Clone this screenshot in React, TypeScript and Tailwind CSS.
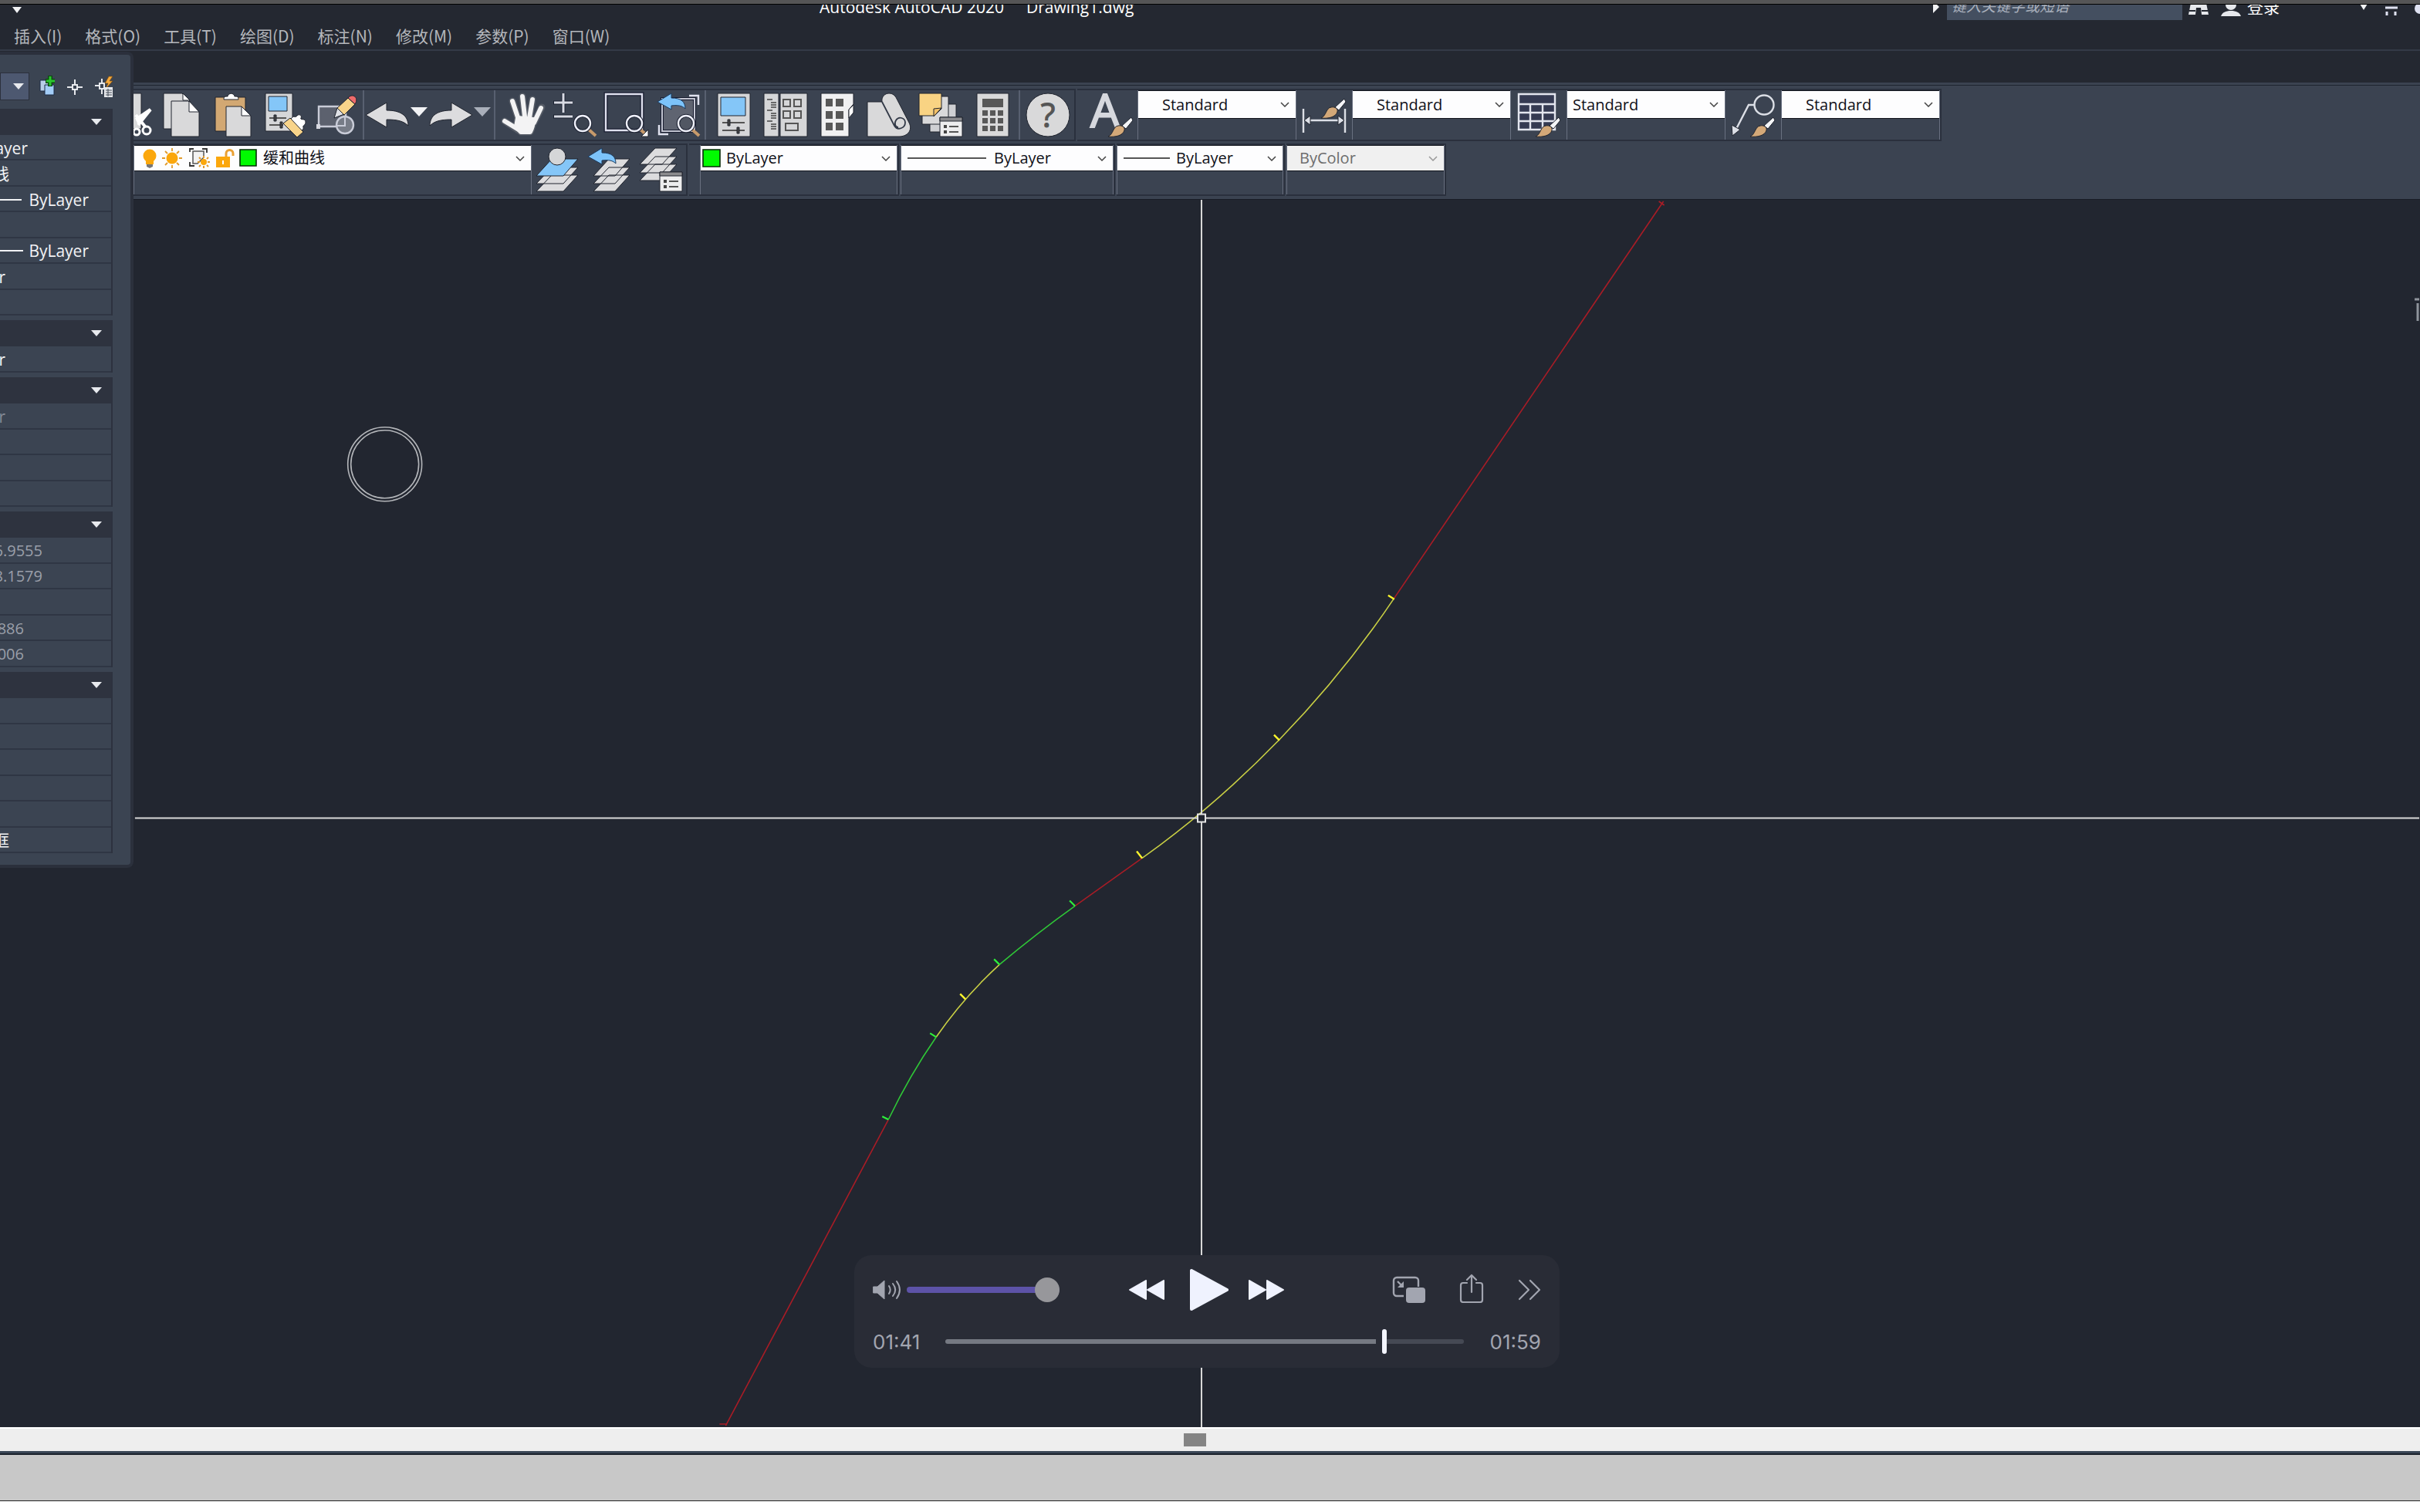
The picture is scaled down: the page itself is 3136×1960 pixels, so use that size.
import React from 'react';

type IconProps = { children: React.ReactNode; label: string };

const menus = ['插入(I)', '格式(O)', '工具(T)', '绘图(D)', '标注(N)', '修改(M)', '参数(P)', '窗口(W)'];

// 56px toolbar button
const Tool: React.FC<IconProps> = ({ children, label }) => (
  <button aria-label={label} className="block size-14 shrink-0">
    <svg viewBox="0 0 56 56" className="size-14 overflow-visible" stroke="#20242e" strokeWidth="1">
      {children}
    </svg>
  </button>
);

const Group: React.FC<{ children: React.ReactNode; last?: boolean }> = ({ children, last }) => (
  <div className={`flex h-full gap-[11px] pt-1 pr-1.5 pl-2 ${last ? '' : 'border-r-2 border-[#586070]'}`}>{children}</div>
);

interface ComboProps {
  label: string;
  value: string;
  width: string;
  pad: string;
  height?: string;
  disabled?: boolean;
  children?: React.ReactNode;
}

const Combo: React.FC<ComboProps> = ({ label, value, width, pad, height = 'h-8', disabled, children }) => (
  <div className="h-full border-x border-[#697080]">
    <div className={`relative border-y border-[#11141c] ${width}`}>
      <select
        aria-label={label}
        disabled={disabled}
        className={`block w-full appearance-none text-xl opacity-100 ${height} ${pad} ${disabled ? 'bg-[#f0f0f0] text-[#6d6d6d]' : 'bg-[#fdfdfe] text-[#101018]'}`}
      >
        <option>{value}</option>
      </select>
      <div className="pointer-events-none absolute inset-y-0 left-0 flex items-center">{children}</div>
      <svg viewBox="0 0 12 7" className="pointer-events-none absolute inset-y-0 right-2 my-auto h-[7px] w-3" fill="none" stroke={disabled ? '#999' : '#444'} strokeWidth="1.5">
        <path d="M1 1l5 5 5-5" />
      </svg>
    </div>
  </div>
);

const Caret: React.FC<{ dim?: boolean }> = ({ dim }) => (
  <svg viewBox="0 0 22 12" className="h-3 w-[22px]" fill={dim ? '#a9afba' : '#f2f3f5'}>
    <path d="M0 0h22L11 12z" />
  </svg>
);

const Lens = () => (
  <>
    <path d="M46 47l9 8" stroke="#c79a6b" strokeWidth="4" />
    <circle cx="38" cy="39" r="10" fill="#3b4351" fillOpacity="0.4" stroke="#1b2030" strokeWidth="4.5" />
    <circle cx="38" cy="39" r="10" fill="none" stroke="#eef0fa" strokeWidth="2.4" />
  </>
);

const Brush = () => (
  <>
    <path d="M54 31l2 4-9 11-5-4z" fill="#f4f5f8" />
    <path d="M24 56c7-3 6-13 13-14 5-1 9 2 8 6-2 7-12 9-21 8z" fill="#d3a878" />
  </>
);

const BackArrow = () => <path d="M1 11L19 0v6c13 0 18 5 18 14-4-4-9-5-18-4v5z" fill="#7cc3fa" stroke="#1d3a5c" />;

const ListWindow = () => (
  <>
    <path d="M27 31h29v25H27z" fill="#ededee" />
    <path d="M27 31h29v5H27z" fill="#8b8b8e" />
    <path d="M32 41h4v4h-4zM32 48h4v4h-4z" fill="#444" stroke="none" />
    <path d="M39 43h12M39 50h12" stroke="#555" strokeWidth="2" />
  </>
);

interface Row {
  text?: string;
  width?: string;
  tone?: string;
  line?: string;
}

interface Section {
  name: string;
  height: string;
  rows: Row[];
}

const bright = 'text-[21px] text-[#f2f3f5]';
const muted = 'text-[21px] text-[#858b96]';
const digits = 'text-xl text-[#9a9fa9]';

const sections: Section[] = [
  {
    name: '常规',
    height: 'h-[268px]',
    rows: [
      { text: 'ByLayer', width: 'w-9', tone: bright },
      { text: '缓和曲线', width: 'w-3', tone: bright },
      { text: 'ByLayer', width: 'w-[115px]', tone: bright, line: 'h-0.5 w-7' },
      {},
      { text: 'ByLayer', width: 'w-[115px]', tone: bright, line: 'h-0.5 w-[30px]' },
      { text: 'ByLayer', width: 'w-[7px]', tone: bright },
      {},
    ],
  },
  { name: '三维效果', height: 'h-[68px]', rows: [{ text: 'ByLayer', width: 'w-[7px]', tone: bright }] },
  { name: '打印样式', height: 'h-[168px]', rows: [{ text: 'ByColor', width: 'w-[7px]', tone: muted }, {}, {}, {}] },
  {
    name: '视图',
    height: 'h-[202px]',
    rows: [
      { text: '6.9555', width: 'w-[55px]', tone: digits },
      { text: '8.1579', width: 'w-[55px]', tone: digits },
      {},
      { text: '886', width: 'w-[31px]', tone: digits },
      { text: '006', width: 'w-[31px]', tone: digits },
    ],
  },
  { name: '其他', height: 'h-[235px]', rows: [{}, {}, {}, {}, {}, { text: '二维线框', width: 'w-3', tone: bright }] },
];

const Palette = () => (
  <aside className="absolute top-[67px] left-0 z-10 w-[173px] rounded-r-lg border-4 border-l-0 border-[#2b303c] bg-[#3b4452] pb-[15px]">
    <div className="mb-[11px] flex h-[59px] items-end">
      <button aria-label="选择类型" className="flex h-9 w-[38px] items-center justify-end border border-[#2b303c] bg-[#4d5870] pr-1.5">
        <svg viewBox="0 0 14 8" className="h-2 w-3.5" fill="#e8eaee"><path d="M0 0h14L7 8z" /></svg>
      </button>
      <button aria-label="切换 PICKADD" className="mb-1.5 ml-3">
        <svg viewBox="0 0 26 28" className="h-7 w-[26px]" stroke="#1d2a44">
          <path d="M2 8h12v14H2z" fill="#b9cfe8" />
          <path d="M8 14h12v13H8z" fill="#a3cdf7" />
          <path d="M15 2v14M9 9h12" stroke="#0e4a12" strokeWidth="6" />
          <path d="M15 3v12M10 9h11" stroke="#2ac52e" strokeWidth="3" />
        </svg>
      </button>
      <button aria-label="选择对象" className="mb-1.5 ml-2.5">
        <svg viewBox="0 0 22 22" className="size-[22px]" fill="none" stroke="#e6e8ec" strokeWidth="2">
          <path d="M11 1v7M11 14v7M1 11h7M14 11h7M8 8h6v6H8z" />
        </svg>
      </button>
      <button aria-label="快速选择" className="mb-1 ml-3.5">
        <svg viewBox="0 0 26 28" className="h-7 w-[26px]" fill="none" stroke="#e6e8ec" strokeWidth="2">
          <path d="M10 4v6M10 17v7M1 13h6M7 10h6v7H7z" />
          <path d="M19 1l-5 9h4l-3 7 9-10h-4l4-6z" fill="#f5a93b" stroke="#7a4a12" strokeWidth="0.7" />
          <path d="M14 16h9v11h-9z" fill="#e6e8ec" />
          <path d="M15 19h8M15 22h8M15 25h8M18 17v10" stroke="#454c59" strokeWidth="1" />
        </svg>
      </button>
    </div>
    <div className="flex flex-col gap-1.5">
      {sections.map((section) => (
        <section key={section.name} className={`flex w-[146px] flex-col border-r-2 border-[#2d323f] ${section.height}`}>
          <button aria-label={section.name} className="flex h-[34px] shrink-0 items-center justify-end bg-[#2e333f] pr-3">
            <svg viewBox="0 0 14 8" className="h-2 w-3.5" fill="#e8eaee"><path d="M0 0h14L7 8z" /></svg>
          </button>
          {section.rows.map((row, i) => (
            <div key={i} className="relative flex flex-1 items-center border-b-2 border-[#2f3644] pt-0.5">
              {row.line && <span className={`absolute left-0 bg-[#f2f3f5] ${row.line}`} />}
              {row.text && (
                <span className={`flex justify-end overflow-hidden leading-7 whitespace-nowrap ${row.width} ${row.tone}`}>
                  <span>{row.text}</span>
                </span>
              )}
            </div>
          ))}
        </section>
      ))}
    </div>
  </aside>
);

const TitleBar = () => (
  <div className="h-[21px] overflow-hidden">
    <div className="-mt-3 flex h-[30px] items-center text-white">
      <svg viewBox="0 0 12 8" className="mt-2 ml-4 h-2 w-3" fill="#f2f3f5"><path d="M0 0h12L6 8z" /></svg>
      <h1 className="ml-[1034px] flex gap-[29px] text-[21px] leading-[30px] whitespace-nowrap">
        <span>Autodesk AutoCAD 2020</span>
        <span>Drawing1.dwg</span>
      </h1>
      <div className="ml-auto flex h-full items-center">
        <svg viewBox="0 0 8 16" className="h-4 w-2" fill="#f2f3f5"><path d="M0 0l8 8-8 8z" /></svg>
        <input
          aria-label="搜索"
          placeholder="键入关键字或短语"
          className="mt-1 ml-2.5 h-[30px] w-[305px] bg-[#444f60] px-1.5 pb-1.5 text-[19px] text-white italic placeholder:text-[#a9b0bc]"
        />
        <button aria-label="搜索按钮" className="ml-2">
          <svg viewBox="0 0 26 24" className="h-6 w-[26px]" fill="#e6e8ec">
            <path d="M4 2h6v6h6V2h6l4 20h-9l-1-9h-6l-1 9H0z" />
            <path d="M1 17h8M17 17h8" stroke="#242831" strokeWidth="2" />
          </svg>
        </button>
        <svg viewBox="0 0 26 24" className="mt-0.5 ml-4 h-6 w-[26px]" fill="#e6e8ec">
          <circle cx="13" cy="8" r="7" />
          <path d="M0 23c2-5 6-7 13-7s11 2 13 7z" />
        </svg>
        <button className="ml-2 text-[21px] leading-[30px]">登录</button>
        <svg viewBox="0 0 10 8" className="ml-[104px] h-2 w-2.5" fill="#f2f3f5"><path d="M0 0h10L5 8z" /></svg>
        <svg viewBox="0 0 18 24" className="ml-[22px] h-6 w-[18px]" fill="none" stroke="#dfe2f2" strokeWidth="3">
          <path d="M0 4h15M1 13h16M3 18v5M14 18v5" />
        </svg>
        <svg viewBox="0 0 12 24" className="ml-4 h-6 w-3" fill="#dfe2f2"><circle cx="12" cy="14" r="7" /></svg>
      </div>
    </div>
  </div>
);

const StandardToolbar = () => (
  <div className="flex h-[68px]">
    <div className="flex border-y-2 border-r-2 border-[#2a303d] pl-[132px]">
      <Group>
        <Tool label="剪切">
          <path d="M5 0h38v46H5z" fill="#d9d9da" />
          <path d="M36 34l19-13-16 20M36 28l12 15" fill="#fff" stroke="#fff" strokeWidth="4" />
          <circle cx="50" cy="48" r="5" fill="none" stroke="#fff" strokeWidth="3" />
          <circle cx="37" cy="50" r="4" fill="none" stroke="#fff" strokeWidth="3" />
        </Tool>
        <Tool label="复制">
          <path d="M5 0h24l10 10v36H5z" fill="#d9d9da" />
          <path d="M30 0v9h9z" fill="#fff" />
          <path d="M15 10h22l14 14v32H15z" fill="#d9d9da" />
          <path d="M38 10v14h13z" fill="#fff" />
        </Tool>
        <Tool label="粘贴">
          <path d="M5 5h39v44H5z" fill="#d2a873" />
          <path d="M16 8c0-4 2-4 5-4 1-5 8-5 9 0 3 0 5 0 5 4z" fill="#fff" />
          <path d="M19 17h20l12 12v27H19z" fill="#d9d9da" />
          <path d="M39 17v12h12z" fill="#fff" />
        </Tool>
        <Tool label="特性匹配">
          <path d="M3 0h35v49H3z" fill="#d5d6d8" />
          <path d="M7 4h24v19H7z" fill="#84c6f8" />
          <path d="M8 32h22M8 41h18" stroke="#555" strokeWidth="2" />
          <path d="M14 28h3v8h-3zM22 37h3v8h-3z" fill="#444" />
          <path d="M34 35l4-4c2-2 4 1 6-2s7 0 5 3 6 0 6 5-4 4-3 7-3 5-5 3z" fill="#fff" />
          <path d="M26 39l9-7 17 18-8 7z" fill="#f8d48a" />
        </Tool>
        <Tool label="块编辑器">
          <path d="M5 17h35v26H5z" fill="#5c616e" stroke="#c9ccd8" strokeWidth="2.4" />
          <path d="M2 40h5v6H2z" fill="#d6d8e0" stroke="none" />
          <circle cx="39" cy="41" r="11" fill="#777c87" stroke="#c9ccd8" strokeWidth="2.4" />
          <path d="M39 30v12H28" fill="none" stroke="#c9ccd8" strokeWidth="2" />
          <path d="M25 32l4-13 9 8z" fill="#dfe1e6" />
          <path d="M29 19L43 6l9 8-14 14z" fill="#f8d48a" />
          <path d="M43 6c5-7 15-1 9 8z" fill="#ee6b6b" />
        </Tool>
      </Group>
      <div className="flex h-full items-center gap-0.5 border-r-2 border-[#586070] pr-1 pl-0.5">
        <Tool label="放弃"><path d="M0 28L27 12v10c17 0 28 6 28 20-6-6-14-8-28-8v10z" fill="#dcdcde" /></Tool>
        <button aria-label="放弃列表" className="mb-2"><Caret /></button>
        <Tool label="重做"><path d="M56 28L29 12v10C12 22 1 28 1 42c6-6 14-8 28-8v10z" fill="#dcdcde" /></Tool>
        <button aria-label="重做列表" className="mb-2"><Caret dim /></button>
      </div>
      <Group>
        <Tool label="实时平移">
          <g stroke="#555b66" strokeWidth="9" strokeLinecap="round" strokeLinejoin="round" fill="#555b66">
            <path d="M14 10l8 24M27 4l3 26M40 8l-4 24M52 18L42 38M4 36l18 12" />
            <path d="M21 32l20 2c0 8-2 12-4 16H25l-6-7z" />
          </g>
          <g stroke="#f3f3f4" strokeWidth="6" strokeLinecap="round" fill="#f3f3f4">
            <path d="M14 10l8 24M27 4l3 26M40 8l-4 24M51 19L42 38M4 36l18 11" />
            <path d="M21 32l20 2c0 8-2 12-4 16H25l-6-7z" strokeLinejoin="round" />
          </g>
        </Tool>
        <Tool label="实时缩放">
          <path d="M13 0v25M0 12h25M0 30h25" stroke="#1b2030" strokeWidth="5" />
          <path d="M13 0v25M1 12h24M1 30h24" stroke="#d9dbe4" strokeWidth="3" />
          <Lens />
        </Tool>
        <Tool label="窗口缩放">
          <path d="M1 1h47v47H1z" fill="none" stroke="#181c30" strokeWidth="5" />
          <path d="M1 1h47v47H1z" fill="none" stroke="#dfe1ee" strokeWidth="2.4" />
          <Lens />
          <path d="M56 47v9h-9z" fill="#fff" />
        </Tool>
        <Tool label="缩放上一个">
          <path d="M42 3h12v12M3 41v12h12" fill="none" stroke="#dfe1ee" strokeWidth="2.4" />
          <path d="M7 7h42v42H7z" fill="#5f6471" stroke="#181c30" strokeWidth="4" />
          <path d="M7 7h42v42H7z" fill="none" stroke="#c3c6d2" strokeWidth="2" />
          <Lens />
          <BackArrow />
        </Tool>
      </Group>
      <Group>
        <Tool label="特性">
          <path d="M7 0h42v56H7z" fill="#d5d6d8" />
          <path d="M11 5h32v24H11z" fill="#84c6f8" />
          <path d="M13 38h29M13 48h29" stroke="#555" strokeWidth="2" />
          <path d="M20 34h3v8h-3zM32 44h3v8h-3z" fill="#444" />
        </Tool>
        <Tool label="设计中心">
          <path d="M0 0h19v56H0zM21 0h35v56H21z" fill="#d5d6d8" />
          <path d="M4 8h7M9 12h7M9 15h7M9 18h7M4 22h7M9 26h7M9 29h7M9 32h7M4 36h7M9 40h7M9 43h7M9 46h7" stroke="#444" strokeWidth="1.6" />
          <path d="M25 8h9v9h-9zM39 8h9v9h-9zM25 23h9v9h-9zM39 23h9v9h-9zM28 39h16v9H28z" fill="none" stroke="#555" strokeWidth="2" />
        </Tool>
        <Tool label="工具选项板">
          <path d="M7 0h42v14l-6 7v35H7z" fill="#f0f0f1" />
          <path d="M43 21l6-6v10l-6 7z" fill="#fff" />
          <g fill="#585858" stroke="none">
            <path d="M13 7h9v10h-9zM26 7h10v10H26zM13 23h9v10h-9zM26 23h10v10H26zM13 38h9v10h-9zM26 38h10v10H26z" />
          </g>
        </Tool>
        <Tool label="图纸集管理器">
          <path d="M0 11h19C18 4 23 0 28 0c5 0 8 3 10 7l16 31c5 10-2 18-13 18H0z" fill="#d9d9da" />
          <path d="M19 11l16 31c4 7 14 3 14-4 0-6-8-9-12-3-3 5 0 9 3 9" fill="none" stroke="#333a48" strokeWidth="1.8" />
        </Tool>
        <Tool label="标记集管理器">
          <path d="M14 30h14v20H14zM36 14h12v20H36z" fill="#cfd0d3" />
          <path d="M4 4h34v36H4z" fill="#d9d9da" />
          <path d="M0 0h29v20l-9 9H0z" fill="#f9d383" />
          <path d="M29 19l-10 1v10z" fill="#f3c066" />
          <ListWindow />
        </Tool>
        <Tool label="快速计算器">
          <path d="M8 0h41v56H8z" fill="#d9d9da" />
          <path d="M15 7h27v11H15zM15 22h7v7h-7zM25 22h7v7h-7zM35 22h7v7h-7zM15 32h7v7h-7zM25 32h7v7h-7zM35 32h7v7h-7zM15 42h7v7h-7zM25 42h7v7h-7zM35 42h7v7h-7z" fill="#585858" stroke="none" />
        </Tool>
      </Group>
      <Group last>
        <Tool label="帮助">
          <circle cx="28" cy="28" r="28" fill="#d9d9da" />
          <text x="28" y="44" textAnchor="middle" fontSize="44" fill="#555" stroke="#555">?</text>
        </Tool>
      </Group>
    </div>
    <div className="ml-0.5 flex border-y-2 border-r-2 border-[#2a303d]">
      <div className="h-full pt-1 pr-1.5 pl-4">
        <Tool label="文字样式">
          <text x="20" y="44" textAnchor="middle" fontSize="60" fill="#d6d8de" stroke="#d6d8de" strokeWidth="2">A</text>
          <Brush />
        </Tool>
      </div>
      <Combo label="文字样式" value="Standard" width="w-[204px]" pad="pl-[31px]" height="h-[35px]" />
      <div className="h-full px-2 pt-1">
        <Tool label="标注样式">
          <path d="M1 20v31M55 20v31M3 35h50" stroke="#dcdfe6" strokeWidth="2.4" />
          <path d="M2 35l8-6v12zM54 35l-8-6v12z" fill="#dcdfe6" />
          <g transform="translate(0 -24)"><Brush /></g>
        </Tool>
      </div>
      <Combo label="标注样式" value="Standard" width="w-[204px]" pad="pl-[31px]" height="h-[35px]" />
      <div className="h-full px-2 pt-1">
        <Tool label="表格样式">
          <path d="M2 1h47v46H2zM2 14h47M2 25h47M2 36h47M17 14v33M33 14v33" fill="#353a52" stroke="#e3e5ee" strokeWidth="2.4" />
          <Brush />
        </Tool>
      </div>
      <Combo label="表格样式" value="Standard" width="w-[204px]" pad="pl-[7px]" height="h-[35px]" />
      <div className="h-full px-2 pt-1">
        <Tool label="多重引线样式">
          <circle cx="42" cy="15" r="12.5" fill="none" stroke="#dcdfe6" strokeWidth="2.4" />
          <path d="M29 15h-7L5 48" fill="none" stroke="#dcdfe6" strokeWidth="2.4" />
          <path d="M0 41l11 6L1 55z" fill="#dcdfe6" />
          <Brush />
        </Tool>
      </div>
      <Combo label="多重引线样式" value="Standard" width="w-[204px]" pad="pl-[31px]" height="h-[35px]" />
    </div>
  </div>
);

const PropertiesToolbar = () => (
  <div className="mt-[3px] flex h-[68px]">
    <div className="flex border-y-2 border-r-2 border-[#2a303d] pl-[173px]">
      <Combo label="图层" value="缓和曲线" width="w-[514px]" pad="pl-[167px]">
        <svg viewBox="0 0 160 28" className="h-7 w-40" fill="none">
          <circle cx="20" cy="11" r="8.5" fill="#fba70c" />
          <path d="M15 17h10v5H15z" fill="#fba70c" />
          <path d="M16 22h8v3l-4 2-4-2z" fill="#777" />
          <circle cx="49" cy="14" r="7.5" fill="#fba70c" />
          <path d="M49 1v4M49 23v4M36 14h4M58 14h4M40 5l3 3M55 20l3 3M58 5l-3 3M43 20l-3 3" stroke="#e09a2c" strokeWidth="1.8" />
          <path d="M72 6V2h5M88 2h6v5M72 19v5h6" stroke="#333" strokeWidth="1.8" />
          <path d="M76 5h14v8l-8 8h-6z" fill="#f2f2f2" stroke="#555" strokeWidth="1.5" />
          <circle cx="90" cy="19" r="4" fill="#fba70c" />
          <path d="M90 11v3M90 24v3M82 19h3M95 19h3M84 13l2 2M94 23l2 2M96 13l-2 2M86 23l-2 2" stroke="#e09a2c" strokeWidth="2" />
          <path d="M106 12h18v14h-18z" fill="#fba70c" />
          <path d="M119 12V8c0-6 9-6 9 0v3" stroke="#e9a033" strokeWidth="3" />
          <path d="M115 17v5" stroke="#fff" strokeWidth="2" />
          <path d="M137 3h21v21h-21z" fill="#00fb00" stroke="#052b05" strokeWidth="1.6" />
        </svg>
      </Combo>
      <div className="flex gap-[11px] px-[5px] pt-1">
        <Tool label="将对象的图层置为当前">
          <path d="M1 56l20-21h34L36 56zM1 46l20-21h34L36 46z" fill="#dcdcde" />
          <path d="M1 36l20-22h34L36 36z" fill="#84c6f8" />
          <circle cx="28" cy="11" r="11" fill="#d5d6d8" />
        </Tool>
        <Tool label="上一个图层">
          <path d="M8 56l20-21h27L36 56zM8 46l20-21h27L36 46zM8 36l20-22h27L36 36z" fill="#dcdcde" />
          <BackArrow />
        </Tool>
        <Tool label="图层状态管理器">
          <path d="M1 42l20-21h28L30 42zM1 32l20-21h28L30 32zM1 21L21 0h28L30 21z" fill="#dcdcde" />
          <ListWindow />
        </Tool>
      </div>
    </div>
    <div className="ml-0.5 flex border-y-2 border-r-2 border-[#2a303d] pl-3.5">
      <Combo label="颜色" value="ByLayer" width="w-[254px]" pad="pl-[33px]">
        <svg viewBox="0 0 24 24" className="ml-0.5 size-6"><path d="M1 1h22v22H1z" fill="#00fb00" stroke="#052b05" strokeWidth="1.6" /></svg>
      </Combo>
    </div>
    <div className="ml-0.5 flex border-y-2 border-r-2 border-[#2a303d]">
      <Combo label="线型" value="ByLayer" width="w-[274px]" pad="pl-[120px]">
        <span className="ml-2 h-0.5 w-[102px] bg-[#555]" />
      </Combo>
    </div>
    <div className="ml-0.5 flex border-y-2 border-r-2 border-[#2a303d]">
      <Combo label="线宽" value="ByLayer" width="w-[214px]" pad="pl-[76px]">
        <span className="ml-2 h-0.5 w-[60px] bg-[#555]" />
      </Combo>
    </div>
    <div className="ml-0.5 flex border-y-2 border-r-2 border-[#2a303d]">
      <Combo label="打印样式" value="ByColor" width="w-[203px]" pad="pl-4" disabled />
    </div>
  </div>
);

const Drawing = () => (
  <svg viewBox="0 258 3136 1592" className="absolute inset-0 size-full" fill="none" strokeWidth="1.6">
    {/* tangents */}
    <path d="M2156 260L1806 776M1480 1112l-87 62M1151 1451L940 1848M932 1846h10M2150 260l7 5" stroke="#a81c26" />
    {/* curves */}
    <path d="M1806 776C1720 904 1606 1022 1480 1112" stroke="#c9cf44" />
    <path d="M1393 1174Q1344 1209 1295 1250M1213 1344Q1179 1393 1151 1451" stroke="#2fc737" />
    <path d="M1295 1250Q1248 1293 1213 1344" stroke="#c9cf44" />
    <path d="M1799 771l8 5M1651 952l7 7M1473 1103l7 9M1244 1288l7 7" stroke="#fdf52c" strokeWidth="2.4" />
    <path d="M1386 1167l7 7M1288 1243l7 7M1205 1339l8 5M1143 1447l8 4" stroke="#2df03a" strokeWidth="2.2" />
    <circle cx="498" cy="601" r="48" stroke="#b4b6ba" />
    <circle cx="498" cy="601" r="44" stroke="#b4b6ba" />
    {/* crosshair */}
    <path d="M174 1060h1377M1562 1060h1574M1557 258v797M1557 1065v785" stroke="#d8d8d8" strokeWidth="2" />
    <path d="M1552 1055h10v10h-10z" stroke="#e4e4e4" strokeWidth="2" />
    <path d="M3130 387h6M3134 392v23" stroke="#8f949c" strokeWidth="3" />
  </svg>
);

const Player = () => (
  <div className="absolute inset-x-0 bottom-[77px] flex justify-center pr-2">
    <div className="h-[146px] w-[914px] rounded-[22px] bg-[#292c36] px-6 pt-4 text-[#a2a5b0]">
      <div className="flex h-[58px] items-center">
        <button aria-label="静音">
          <svg viewBox="0 0 36 26" className="h-[26px] w-9" fill="none" stroke="#a2a5b0" strokeWidth="2" strokeLinecap="round">
            <path d="M1 9h5l9-8v24l-9-8H1z" fill="#a2a5b0" strokeLinejoin="round" strokeWidth="1" />
            <path d="M21 8c2 3 2 7 0 10M26 5c4 5 4 11 0 16M31 2c5 7 5 15 0 22" />
          </svg>
        </button>
        <input
          type="range"
          aria-label="音量"
          defaultValue={100}
          className="ml-2 h-2 w-[198px] appearance-none rounded-full bg-[#5d53a8] [&::-webkit-slider-thumb]:size-8 [&::-webkit-slider-thumb]:appearance-none [&::-webkit-slider-thumb]:rounded-full [&::-webkit-slider-thumb]:bg-[#97979b]"
        />
        <button aria-label="快退" className="ml-[90px]">
          <svg viewBox="0 0 46 26" className="h-[26px] w-[46px]" fill="#eff2fe" stroke="#eff2fe" strokeWidth="2" strokeLinejoin="round">
            <path d="M22 1v24L1 13zM45 1v24L24 13z" />
          </svg>
        </button>
        <button aria-label="播放" className="ml-[33px]">
          <svg viewBox="0 0 50 56" className="h-14 w-[50px]" fill="#eff2fe" stroke="#eff2fe" strokeWidth="4" strokeLinejoin="round">
            <path d="M2 3v50l46-25z" />
          </svg>
        </button>
        <button aria-label="快进" className="ml-[26px]">
          <svg viewBox="0 0 46 26" className="h-[26px] w-[46px]" fill="#eff2fe" stroke="#eff2fe" strokeWidth="2" strokeLinejoin="round">
            <path d="M1 1v24l21-12zM24 1v24l21-12z" />
          </svg>
        </button>
        <button aria-label="画中画" className="ml-auto">
          <svg viewBox="0 0 44 36" className="h-9 w-11" fill="none" stroke="#a2a5b0" strokeWidth="2.4">
            <path d="M15 26H6a4 4 0 0 1-4-4V6a4 4 0 0 1 4-4h24a4 4 0 0 1 4 4v8" />
            <path d="M7 7l6 6" />
            <path d="M15 7v8H7z" fill="#a2a5b0" stroke="none" />
            <rect x="18" y="15" width="25" height="20" rx="4" fill="#a2a5b0" stroke="none" />
          </svg>
        </button>
        <button aria-label="共享" className="ml-[43px]">
          <svg viewBox="0 0 32 38" className="mb-1 h-[38px] w-8" fill="none" stroke="#a2a5b0" strokeWidth="2.2" strokeLinecap="round" strokeLinejoin="round">
            <path d="M10 12H5a3 3 0 0 0-3 3v19a3 3 0 0 0 3 3h22a3 3 0 0 0 3-3V15a3 3 0 0 0-3-3h-5M16 24V2M10 8l6-6 6 6" />
          </svg>
        </button>
        <button aria-label="更多" className="ml-11">
          <svg viewBox="0 0 30 28" className="h-7 w-[30px]" fill="none" stroke="#a2a5b0" strokeWidth="2.2" strokeLinecap="round" strokeLinejoin="round">
            <path d="M2 2l12 12L2 26M16 2l12 12-12 12" />
          </svg>
        </button>
      </div>
      <div className="mt-[22px] flex h-8 items-center justify-between font-[Inter] text-[26px]">
        <span>01:41</span>
        <input
          type="range"
          aria-label="进度"
          min={0}
          max={119}
          defaultValue={101}
          className="h-1.5 w-[672px] appearance-none rounded-full bg-[linear-gradient(to_right,#757982_83%,transparent_83%,transparent_85%,#454954_85%)] [&::-webkit-slider-thumb]:h-8 [&::-webkit-slider-thumb]:w-1.5 [&::-webkit-slider-thumb]:appearance-none [&::-webkit-slider-thumb]:rounded-full [&::-webkit-slider-thumb]:bg-[#f3f5ff]"
        />
        <span>01:59</span>
      </div>
    </div>
  </div>
);

export default function App() {
  return (
    <div className="relative flex min-h-screen flex-col overflow-hidden bg-[#222630] font-['Open_Sans','Noto_Sans_CJK_SC',sans-serif]">
      <div className="h-1.5 border-b border-black bg-[#555556]" />
      <header className="bg-[#242831]">
        <TitleBar />
        <nav className="flex h-[37px] items-center gap-[30px] pt-0.5 pl-[18px] font-['Noto_Sans_CJK_SC',sans-serif] text-[21px] text-[#b4b7bc]">
          {menus.map((menu) => (
            <button key={menu}>{menu}</button>
          ))}
        </nav>
        <div className="h-[43px] border-t-2 border-[#343a47]" />
      </header>
      <Palette />
      <div className="overflow-hidden bg-[#3b4351] pb-1">
        <div className="mb-1 h-1 border-b border-[#1f2530]" />
        <StandardToolbar />
        <PropertiesToolbar />
      </div>
      <main className="relative flex-1 border-t border-[#181c26]">
        <Drawing />
        <Player />
      </main>
      <div className="flex h-[31px] items-center justify-center border-t-2 border-white bg-[#eeeeee] pr-[39px]">
        <button aria-label="滚动条" className="h-[17px] w-[29px] bg-[#848484]" />
      </div>
      <div className="h-[5px] border-b-2 border-[#1b222c] bg-[#3a4656]" />
      <footer className="h-[60px] border-b border-[#222] bg-[#c8c8c8]" />
      <div className="h-3.5 bg-white" />
    </div>
  );
}
